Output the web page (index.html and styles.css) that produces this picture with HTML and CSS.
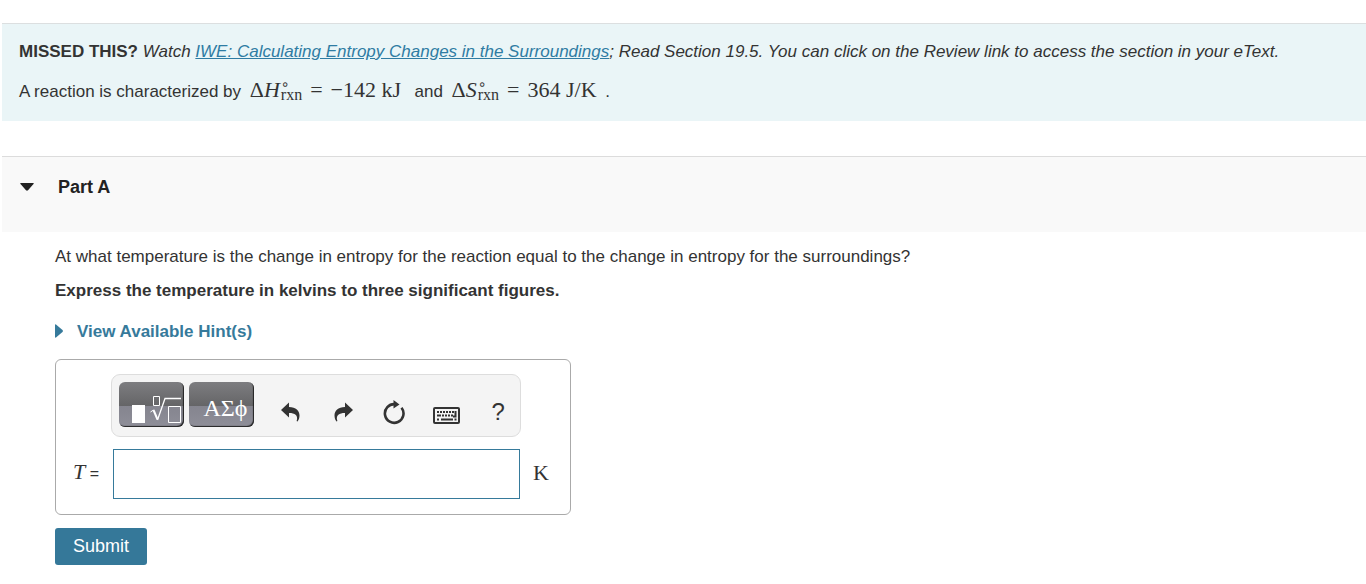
FILE: index.html
```html
<!DOCTYPE html>
<html lang="en">
<head>
  <meta charset="UTF-8">
  <title>Part A</title>
  <meta name="viewport" content="width=device-width, initial-scale=1.0">
  <link rel="stylesheet" href="styles.css">
</head>
<body>
  <!-- Problem introduction -->
  <section class="intro">
    <p><b>MISSED THIS?</b> <i>Watch <a href="#">IWE: Calculating Entropy Changes in the Surroundings</a>; Read Section 19.5. You can click on the Review link to access the section in your eText.</i></p>
    <p>A reaction is characterized by <span class="math">Δ<i>H</i><span class="scripts"><span class="degree">∘</span><span>rxn</span></span><span class="rel">=</span>−142 kJ</span>&nbsp; and <span class="math">Δ<i>S</i><span class="scripts"><span class="degree">∘</span><span>rxn</span></span><span class="rel">=</span>364 J/K</span> .</p>
  </section>

  <!-- Part header -->
  <header class="part-header">
    <button type="button" class="part-toggle" aria-label="Collapse Part A">
      <svg width="14" height="8" viewBox="0 0 14 8"><path d="M1 0h12q1.400 0 .5 1L8 7.300q-1 .9-2 0L.5 1Q-.4 0 1 0z" fill="#222"/></svg>
    </button>
    <h2>Part A</h2>
  </header>

  <main class="part-body">
    <p class="question">At what temperature is the change in entropy for the reaction equal to the change in entropy for the surroundings?</p>
    <p class="instructions">Express the temperature in kelvins to three significant figures.</p>
    <a href="#" class="hints">
      <svg width="9" height="14" viewBox="0 0 9 14"><path d="M0 1q0-1 1-.5l6.500 5.500q1 1 0 2L1 13.500q-1 .5-1-.5z" fill="#367a9b"/></svg>
      View Available Hint(s)
    </a>

    <form class="answer-form">
      <div class="answer-box">
        <div class="toolbar">
          <button type="button" class="palette-btn" aria-label="Templates">
            <svg width="65" height="45" viewBox="0 0 65 45" fill="none" stroke="#fff">
              <path d="M13 23h13v18H13z" fill="#fff" stroke="none"/>
              <path d="M34.500 14.500h6v9h-6zM49.500 24.500h12v16h-12z"/>
              <path d="M31.500 30l3-2"/>
              <path d="M34.500 28l4 9.500" stroke-width="2"/>
              <path d="M38.500 38L46 16.500h16" stroke-width="1.300"/>
            </svg>
          </button>
          <button type="button" class="palette-btn symbols" aria-label="Symbols">ΑΣϕ</button>
          <button type="button" class="icon-btn" aria-label="Undo">
            <svg width="20" height="22" viewBox="0 0 20 22"><path d="M0 9L8 1.500V6c7 0 10.500 4 10.500 8.500 0 2.500-.8 4.500-2 6-1-.3-1-.6-.6-1.500C17 14.500 14 12 8 12v4.500z" fill="#333"/></svg>
          </button>
          <button type="button" class="icon-btn" aria-label="Redo">
            <svg width="20" height="22" viewBox="0 0 20 22"><path d="M20 9l-8-7.500V6C5 6 1.500 10 1.500 14.500c0 2.500.8 4.500 2 6 1-.3 1-.6.6-1.500C3 14.500 6 12 12 12v4.500z" fill="#333"/></svg>
          </button>
          <button type="button" class="icon-btn" aria-label="Reset">
            <svg width="22" height="26" viewBox="0 0 22 26" fill="none"><path d="M12 5.200A9.300 9.300 0 1 0 18.500 8.700" stroke="#333" stroke-width="2.600"/><path d="M10.500 1l6 4.500-6 4z" fill="#333"/></svg>
          </button>
          <button type="button" class="icon-btn" aria-label="Keyboard shortcuts">
            <svg width="27" height="24" viewBox="0 0 27 24" fill="none" stroke="#333">
              <rect x="1" y="8" width="25" height="15" rx="1" stroke-width="2"/>
              <path d="M4 12h17M6 15.500h14" stroke-width="2" stroke-dasharray="2 1"/>
              <path d="M22.500 11v5.500H20M4 15.500h2M8 19.500h12M4 19.500h2M21.500 19.500h2" stroke-width="2"/>
            </svg>
          </button>
          <button type="button" class="icon-btn help" aria-label="Help">?</button>
        </div>
        <label for="answer" class="answer-label"><i>T</i> =</label>
        <input type="text" id="answer" class="answer-input" autocomplete="off">
        <span class="unit">K</span>
      </div>
      <button type="submit" class="submit-btn">Submit</button>
    </form>
  </main>
</body>
</html>
```

FILE: styles.css
```css
* {
  box-sizing: border-box;
}
body {
  margin: 23px 0 0 2px;
  background: #fff;
  color: #333;
  font-family: "Liberation Sans", Arial, sans-serif;
  font-size: 17px;
  line-height: 20px;
}
p, h2 {
  margin: 0;
}
button {
  padding: 0;
  border: none;
  background: none;
  font-family: inherit;
  color: inherit;
  cursor: pointer;
}
svg {
  display: block;
}

/* Introduction */
.intro {
  display: flex;
  flex-direction: column;
  gap: 14px;
  padding: 16px 17px 19px;
  border-top: 1px solid #dcdfe0;
  background: #eaf5f7;
}
.intro p {
  height: 24px;
  line-height: 24px;
  white-space: nowrap;
}
.intro a {
  color: #2f7ca3;
}
.math {
  margin: 0 4px;
  font-family: "Liberation Serif", "Times New Roman", serif;
  font-size: 22px;
}
.scripts {
  display: inline-flex;
  flex-direction: column;
  margin-left: 1px;
  vertical-align: 8px;
  font-size: 16px;
  line-height: 10px;
}
.degree {
  height: 11px;
  font-family: "DejaVu Sans", sans-serif;
  font-size: 14px;
}
.rel {
  margin: 0 8px;
}

/* Part header */
.part-header {
  display: flex;
  align-items: flex-start;
  gap: 24px;
  margin-top: 35px;
  padding: 20px 18px 35px;
  border-top: 1px solid #dcdcdc;
  background: #f9f9f9;
  color: #222;
}
.part-toggle {
  height: 20px;
}
.part-header h2 {
  font-size: 18px;
  line-height: 20px;
}

/* Part body */
.part-body {
  padding: 15px 53px;
}
.instructions {
  margin-top: 14px;
  font-weight: bold;
}
.hints {
  display: flex;
  gap: 13px;
  margin-top: 21px;
  color: #367a9b;
  font-weight: bold;
  text-decoration: none;
}
.hints svg {
  margin-top: 2px;
}
.answer-box {
  display: grid;
  grid-template-columns: 41px minmax(0, 410px) 16px;
  column-gap: 12px;
  row-gap: 12px;
  align-items: center;
  max-width: 516px;
  margin-top: 17px;
  padding: 14px 8px 15px 2px;
  border: 1px solid #aaa;
  border-radius: 6px;
}
.toolbar {
  grid-column: 2;
  display: flex;
  align-items: center;
  height: 63px;
  padding: 0 7px 2px;
  border: 1px solid #ddd;
  border-radius: 9px;
  background: #f4f4f4;
}
.palette-btn {
  width: 65px;
  height: 45px;
  border-radius: 6px;
  background: linear-gradient(#7d7d80, #656567 53%, #85858f 53%, #8e8e98);
  box-shadow: inset -1px -1px 1px #222;
  color: #fff;
}
.symbols {
  margin-left: 5px;
  padding: 8px 0 0 8px;
  font-family: "Liberation Serif", serif;
  font-size: 24px;
}
.icon-btn {
  display: flex;
  justify-content: center;
  width: 30px;
  margin-left: 22px;
  padding-top: 14px;
}
.help {
  font-size: 24px;
}
.answer-label {
  grid-column: 1;
  justify-self: end;
  padding-bottom: 3px;
  font-size: 16px;
  white-space: nowrap;
}
.answer-label i, .unit {
  font-family: "Liberation Serif", "Times New Roman", serif;
  font-size: 22px;
}
.unit {
  padding-bottom: 3px;
}
.answer-input {
  justify-self: center;
  width: calc(100% - 3px);
  height: 50px;
  padding: 0 8px;
  border: 1px solid #367a9b;
  background: #fff;
  color: inherit;
  font: inherit;
}
.submit-btn {
  width: 92px;
  height: 37px;
  margin-top: 13px;
  border-radius: 3px;
  background: #357899;
  color: #fff;
  font-size: 18px;
}
```
